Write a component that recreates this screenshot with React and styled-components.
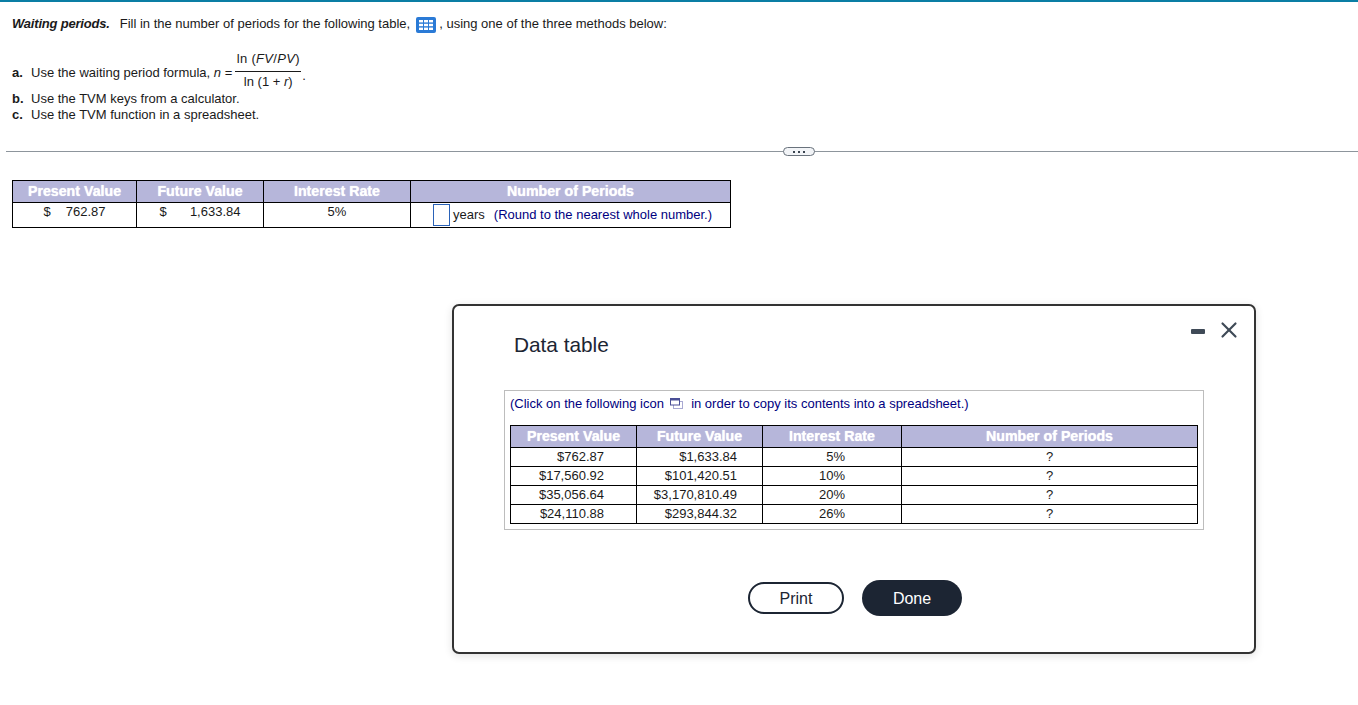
import styled, { createGlobalStyle } from "styled-components"
import { X } from "lucide-react"

const GlobalStyle = createGlobalStyle`
  html, body {
    margin: 0;
    padding: 0;
    background: #fff;
  }
  body {
    font-family: "Liberation Sans", Arial, sans-serif;
    font-size: 13px;
    color: #1a1a1a;
  }
`

const summaryCols = [124, 127, 147, 320]
const dataCols = [126, 126, 139, 296]
const headers = ["Present Value", "Future Value", "Interest Rate", "Number of Periods"]
const rows = [
  ["$762.87", "$1,633.84", "5%"],
  ["$17,560.92", "$101,420.51", "10%"],
  ["$35,056.64", "$3,170,810.49", "20%"],
  ["$24,110.88", "$293,844.32", "26%"],
]

const GridIcon = () => (
  <svg width="20" height="16" viewBox="0 0 20 16">
    <rect width="20" height="16" rx="2" fill="#2a7ad6" />
    <g fill="#fff">
      <rect x="3" y="3" width="4" height="2.4" />
      <rect x="8" y="3" width="4" height="2.4" />
      <rect x="13" y="3" width="4" height="2.4" />
      <rect x="3" y="6.8" width="4" height="2.4" />
      <rect x="8" y="6.8" width="4" height="2.4" />
      <rect x="13" y="6.8" width="4" height="2.4" />
      <rect x="3" y="10.6" width="4" height="2.4" />
      <rect x="8" y="10.6" width="4" height="2.4" />
      <rect x="13" y="10.6" width="4" height="2.4" />
    </g>
  </svg>
)

const CopyIcon = () => (
  <svg width="13" height="11" viewBox="0 0 13 11">
    <rect x="3.5" y="3.5" width="9" height="7" fill="#fff" stroke="#a9a9d2" />
    <rect x="0.5" y="0.5" width="9" height="6.5" fill="#fff" stroke="#4a4f96" />
    <rect x="0.5" y="0.5" width="9" height="2" fill="#4a4f96" />
  </svg>
)

const App = () => (
  <>
    <GlobalStyle />
    <Page>
      <Intro>
        <Lead>
          <em>Waiting periods.</em>
          <LeadRest>Fill in the number of periods for the following table,</LeadRest>
          <GridButton><GridIcon /></GridButton>
          <span>, using one of the three methods below:</span>
        </Lead>
        <FormulaLine>
          <Letter>a.</Letter>
          <span>Use the waiting period formula, <i>n</i> =</span>
          <Fraction>
            <Numerator>ln (<i>FV</i>/<i>PV</i>)</Numerator>
            <Denominator>ln (1 + <i>r</i>)</Denominator>
          </Fraction>
          <FormulaEnd>.</FormulaEnd>
        </FormulaLine>
        <Method><Letter>b.</Letter>Use the TVM keys from a calculator.</Method>
        <Method><Letter>c.</Letter>Use the TVM function in a spreadsheet.</Method>
      </Intro>

      <Divider>
        <DividerButton><i /><i /><i /></DividerButton>
      </Divider>

      <SummaryTable>
        <colgroup>
          {summaryCols.map(w => <col key={w} width={w} />)}
        </colgroup>
        <thead>
          <tr>{headers.map(h => <HeadCell key={h}>{h}</HeadCell>)}</tr>
        </thead>
        <tbody>
          <tr>
            <SummaryCell><Money $width={62}><span>$</span><span>762.87</span></Money></SummaryCell>
            <SummaryCell><Money $width={81}><span>$</span><span>1,633.84</span></Money></SummaryCell>
            <SummaryCell>5%</SummaryCell>
            <AnswerCell>
              <AnswerRow>
                <AnswerBox />
                <AnswerText>years</AnswerText>
                <Hint>(Round to the nearest whole number.)</Hint>
              </AnswerRow>
            </AnswerCell>
          </tr>
        </tbody>
      </SummaryTable>

      <Dialog>
        <DialogHeader>
          <DialogTitle>Data table</DialogTitle>
          <WindowControls>
            <MinimizeBar />
            <X size={26} color="#3f4a57" strokeWidth={2} />
          </WindowControls>
        </DialogHeader>

        <DataBox>
          <CopyNote>
            (Click on the following icon <CopyIcon /> in order to copy its contents into a spreadsheet.)
          </CopyNote>
          <DataTable>
            <colgroup>
              {dataCols.map(w => <col key={w} width={w} />)}
            </colgroup>
            <thead>
              <tr>{headers.map(h => <HeadCell key={h}>{h}</HeadCell>)}</tr>
            </thead>
            <tbody>
              {rows.map(row => (
                <tr key={row[0]}>
                  <DataCell $right={32}>{row[0]}</DataCell>
                  <DataCell $right={25}>{row[1]}</DataCell>
                  <DataCell $right={56}>{row[2]}</DataCell>
                  <QuestionCell>?</QuestionCell>
                </tr>
              ))}
            </tbody>
          </DataTable>
        </DataBox>

        <DialogActions>
          <PrintButton>Print</PrintButton>
          <DoneButton>Done</DoneButton>
        </DialogActions>
      </Dialog>
    </Page>
  </>
)

export default App

const Page = styled.div`
  position: relative;
  width: 1358px;
  height: 705px;
  overflow: hidden;
  border-top: 2px solid #0a7ea4;
  box-sizing: border-box;
`
const Intro = styled.div`
  padding: 11px 0 0 12px;
`
const Lead = styled.div`
  display: flex;
  align-items: center;
  height: 20px;
  em {
    font-weight: bold;
    font-style: italic;
    letter-spacing: -0.2px;
  }
`
const LeadRest = styled.span`
  margin-left: 10px;
`
const GridButton = styled.span`
  display: inline-flex;
  margin: 4px 3px 0 6px;
`
const FormulaLine = styled.div`
  display: flex;
  align-items: center;
  height: 36px;
  margin-top: 21px;
`
const Letter = styled.span`
  display: inline-block;
  width: 19px;
  font-weight: bold;
`
const Fraction = styled.span`
  display: inline-flex;
  flex-direction: column;
  align-items: center;
  margin: 0 0 4px 3px;
  width: 66px;
`
const Numerator = styled.span`
  width: 100%;
  text-align: center;
  line-height: 14px;
  letter-spacing: 0.3px;
  padding-bottom: 5px;
  border-bottom: 1px solid #1a1a1a;
`
const Denominator = styled.span`
  line-height: 14px;
  padding-top: 3px;
`
const FormulaEnd = styled.span`
  margin: 6px 0 0 1px;
`
const Method = styled.div`
  line-height: 16px;
  &:nth-child(3) {
    margin-top: 1px;
  }
`
const Divider = styled.div`
  display: flex;
  margin: 28px 0 0 6px;
  height: 1px;
  background: #8d959c;
  padding-left: 777px;
`
const DividerButton = styled.div`
  display: flex;
  align-items: center;
  justify-content: center;
  gap: 3px;
  box-sizing: border-box;
  width: 32px;
  height: 9px;
  margin-top: -4px;
  background: #f2f4f7;
  border: 1px solid #69727c;
  border-radius: 5px;
  i {
    width: 2px;
    height: 2px;
    background: #3a4450;
  }
`
const SummaryTable = styled.table`
  margin: 28px 0 0 12px;
  width: 719px;
  table-layout: fixed;
  border-collapse: collapse;
`
const HeadCell = styled.th`
  height: 22px;
  padding: 0 0 2px;
  box-sizing: border-box;
  background: #b6b6da;
  border: 1px solid #000;
  color: #fff;
  font-size: 14.2px;
  font-weight: bold;
  text-align: center;
  text-shadow: 0 0 1px #fff;
`
const SummaryCell = styled.td`
  height: 25px;
  padding: 2px 0 0;
  box-sizing: border-box;
  border: 1px solid #000;
  text-align: center;
  vertical-align: top;
  line-height: 14px;
`
const Money = styled.span`
  display: inline-flex;
  justify-content: space-between;
  width: ${props => props.$width}px;
`
const AnswerCell = styled.td`
  padding: 0 0 0 22px;
  border: 1px solid #000;
`
const AnswerRow = styled.div`
  display: flex;
  align-items: center;
  height: 24px;
  white-space: nowrap;
`
const AnswerBox = styled.span`
  box-sizing: border-box;
  width: 17px;
  height: 22px;
  margin-right: 3px;
  border: 1px solid #2a62b8;
  background: #fff;
`
const AnswerText = styled.span`
  padding-bottom: 2px;
`
const Hint = styled(AnswerText)`
  margin-left: 9px;
  color: #000080;
`
const Dialog = styled.div`
  position: absolute;
  left: 452px;
  top: 302px;
  box-sizing: border-box;
  width: 804px;
  height: 350px;
  padding: 0 50px 0 50px;
  background: #fff;
  border: 2px solid #333;
  border-radius: 7px;
  box-shadow: 0 2px 8px rgba(0, 0, 0, 0.12);
`
const DialogHeader = styled.div`
  display: flex;
  justify-content: space-between;
  align-items: flex-start;
  height: 84px;
  margin-right: -38px;
  padding: 15px 0 0 10px;
  box-sizing: border-box;
`
const DialogTitle = styled.h2`
  margin: 0;
  padding-top: 4px;
  font-size: 20.8px;
  font-weight: normal;
  line-height: 40px;
  color: #1c2533;
`
const WindowControls = styled.div`
  display: flex;
  align-items: center;
  gap: 11px;
  margin-top: -4px;
`
const MinimizeBar = styled.span`
  display: block;
  width: 14px;
  height: 5px;
  margin-top: 3px;
  border-radius: 1px;
  background: #3f4a57;
`
const DataBox = styled.div`
  box-sizing: border-box;
  width: 700px;
  height: 140px;
  padding: 0 5px;
  border: 1px solid #bdbdbd;
`
const CopyNote = styled.div`
  height: 34px;
  line-height: 26px;
  color: #000080;
  svg {
    margin: 0 5px 0 2px;
    vertical-align: -1px;
  }
`
const DataTable = styled.table`
  width: 687px;
  table-layout: fixed;
  border-collapse: collapse;
`
const DataCell = styled.td`
  height: 18px;
  padding: 0 ${props => props.$right}px 0 0;
  border: 1px solid #000;
  text-align: right;
  line-height: 14px;
`
const QuestionCell = styled.td`
  padding: 0;
  border: 1px solid #000;
  text-align: center;
  line-height: 14px;
`
const DialogActions = styled.div`
  display: flex;
  justify-content: center;
  gap: 18px;
  margin-top: 50px;
  padding-left: 2px;
`
const PrintButton = styled.button`
  box-sizing: border-box;
  width: 96px;
  height: 32px;
  margin-top: 2px;
  padding-top: 2px;
  background: #fff;
  border: 2px solid #1c2533;
  border-radius: 16px;
  color: #1c2533;
  font-family: inherit;
  font-size: 16px;
`
const DoneButton = styled.button`
  box-sizing: border-box;
  width: 100px;
  height: 36px;
  padding-top: 2px;
  background: #1c2533;
  border: 0;
  border-radius: 18px;
  color: #fff;
  font-family: inherit;
  font-size: 16px;
`
